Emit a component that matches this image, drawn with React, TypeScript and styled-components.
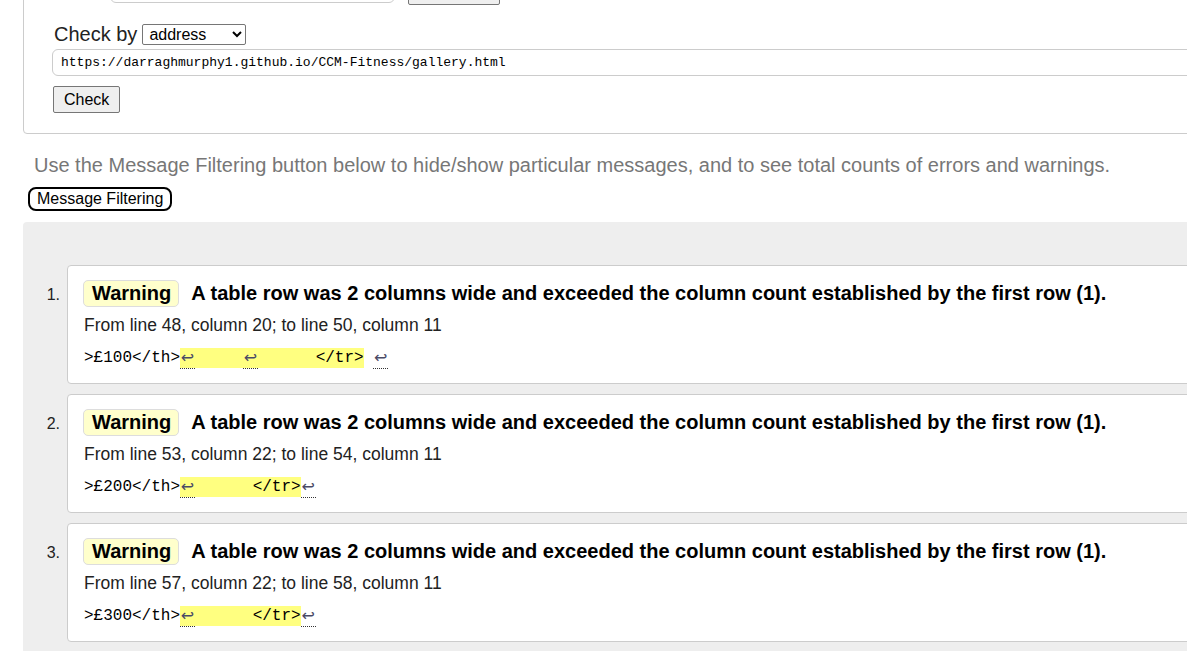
import React from 'react';
import styled, { createGlobalStyle } from 'styled-components';

const GlobalStyle = createGlobalStyle`
  html, body {
    margin: 0;
    padding: 0;
    overflow: hidden;
    background: #fff;
  }
  body {
    font-family: "Liberation Sans", Arial, sans-serif;
    color: #222;
  }
`;

const Page = styled.div`
  width: 1300px;
  padding-left: 23px;
`;

const FormBox = styled.div`
  margin-top: -36px;
  padding: 10px 0 20px 29px;
  border: 1px solid #ccc;
  border-radius: 4px;
  width: 1240px;
`;

const TopRow = styled.div`
  display: flex;
  align-items: flex-start;
  height: 30px;
`;

const HiddenInput = styled.div`
  margin-left: 57px;
  width: 283px;
  height: 26px;
  border: 1px solid #ccc;
  border-radius: 6px;
`;

const HiddenButton = styled.div`
  margin-left: 13px;
  width: 90px;
  height: 28px;
  background: #efefef;
  border: 1px solid #767676;
  border-radius: 2px;
`;

const CheckByRow = styled.div`
  display: flex;
  align-items: center;
  height: 24px;
  margin-top: 17px;
  padding-left: 1px;
  font-size: 20px;
  color: #222;
`;

const Select = styled.select`
  margin-left: 5px;
  width: 104px;
  height: 21px;
  padding: 0 0 0 2px;
  font-family: "Liberation Sans", Arial, sans-serif;
  font-size: 16px;
  color: #000;
  background: #fff;
  border: 1px solid #767676;
  border-radius: 2px;
`;

const UrlInput = styled.div`
  margin-top: 3px;
  margin-left: -1px;
  height: 25px;
  width: 1200px;
  border: 1px solid #ccc;
  border-radius: 6px;
  padding-left: 8px;
  font-family: "Liberation Mono", monospace;
  font-size: 13px;
  line-height: 25px;
  color: #000;
`;

const Button = styled.button`
  display: block;
  margin-top: 10px;
  height: 27px;
  padding: 0 10px;
  font-family: "Liberation Sans", Arial, sans-serif;
  font-size: 16px;
  color: #000;
  background: #efefef;
  border: 1px solid #767676;
  border-radius: 2px;
`;

const Intro = styled.p`
  margin: 20px 0 0;
  padding-left: 11px;
  font-size: 20px;
  line-height: 23px;
  color: #777;
`;

const FilterButton = styled.button`
  display: block;
  margin: 10px 0 0 5px;
  height: 24px;
  padding: 0 7px;
  font-family: "Liberation Sans", Arial, sans-serif;
  font-size: 16px;
  color: #000;
  background: #fff;
  border: 2px solid #000;
  border-radius: 8px;
`;

const Results = styled.ol`
  list-style: none;
  margin: 11px 0 0;
  padding: 43px 0 12px;
  background: #eee;
  border-radius: 4px;
  display: flex;
  flex-direction: column;
  gap: 10px;
`;

const Item = styled.li`
  display: flex;
  align-items: flex-start;
`;

const Num = styled.span`
  width: 44px;
  box-sizing: border-box;
  padding: 21px 7px 0 0;
  text-align: right;
  font-size: 16px;
  line-height: 18px;
  color: #222;
`;

const Card = styled.div`
  flex: 1;
  padding: 14px 15px 15px 15px;
  background: #fff;
  border: 1px solid #ccc;
  border-radius: 4px;
`;

const TitleRow = styled.div`
  display: flex;
  align-items: center;
  height: 27px;
`;

const Badge = styled.span`
  padding: 0 7px 0 8px;
  height: 25px;
  line-height: 25px;
  font-size: 20px;
  font-weight: bold;
  color: #000;
  background: #ffffcc;
  border: 1px solid #ddd;
  border-radius: 5px;
`;

const Title = styled.span`
  margin-left: 12px;
  font-size: 20px;
  font-weight: bold;
  color: #000;
`;

const Location = styled.p`
  margin: 8px 0 0;
  padding-left: 1px;
  font-size: 17.5px;
  line-height: 20px;
  color: #222;
`;

const Extract = styled.code`
  display: block;
  margin-top: 13px;
  padding-left: 1px;
  height: 20px;
  font-family: "Liberation Mono", monospace;
  font-size: 16px;
  line-height: 20px;
  white-space: pre;
  color: #000;
`;

const Mark = styled.mark`
  display: inline-block;
  vertical-align: top;
  height: 20px;
  background: #ffff80;
  color: #000;
`;

const Lf = styled.span`
  display: inline-block;
  vertical-align: top;
  width: 15px;
  height: 20px;
  line-height: 20px;
  font-family: "DejaVu Sans", sans-serif;
  font-size: 16px;
  text-align: center;
  color: #4a4a66;
  border-bottom: 1px dotted #333;
`;

type Message = {
  from: string;
  code: string;
  mark: string;
  tail: string;
};

const title =
  'A table row was 2 columns wide and exceeded the column count established by the first row (1).';

const messages: Message[] = [
  {
    from: 'From line 48, column 20; to line 50, column 11',
    code: '>£100</th>',
    mark: '\n     \n      </tr>',
    tail: ' \n',
  },
  {
    from: 'From line 53, column 22; to line 54, column 11',
    code: '>£200</th>',
    mark: '\n      </tr>',
    tail: '\n',
  },
  {
    from: 'From line 57, column 22; to line 58, column 11',
    code: '>£300</th>',
    mark: '\n      </tr>',
    tail: '\n',
  },
];

function withBreaks(text: string) {
  return text.split(/(\n)/).map((part, i) =>
    part === '\n' ? <Lf key={i}>↩</Lf> : part ? <React.Fragment key={i}>{part}</React.Fragment> : null
  );
}

export default function App() {
  return (
    <Page>
      <GlobalStyle />
      <FormBox>
        <TopRow>
          <HiddenInput />
          <HiddenButton />
        </TopRow>
        <CheckByRow>
          Check by
          <Select defaultValue='address'>
            <option value='address'>address</option>
            <option value='file'>file upload</option>
            <option value='text'>text input</option>
          </Select>
        </CheckByRow>
        <UrlInput>https://darraghmurphy1.github.io/CCM-Fitness/gallery.html</UrlInput>
        <Button>Check</Button>
      </FormBox>
      <Intro>
        Use the Message Filtering button below to hide/show particular messages, and to see total counts of errors and warnings.
      </Intro>
      <FilterButton>Message Filtering</FilterButton>
      <Results>
        {messages.map((m, i) => (
          <Item key={i}>
            <Num>{i + 1}.</Num>
            <Card>
              <TitleRow>
                <Badge>Warning</Badge>
                <Title>{title}</Title>
              </TitleRow>
              <Location>{m.from}</Location>
              <Extract>
                {m.code}
                <Mark>{withBreaks(m.mark)}</Mark>
                {withBreaks(m.tail)}
              </Extract>
            </Card>
          </Item>
        ))}
      </Results>
    </Page>
  );
}
